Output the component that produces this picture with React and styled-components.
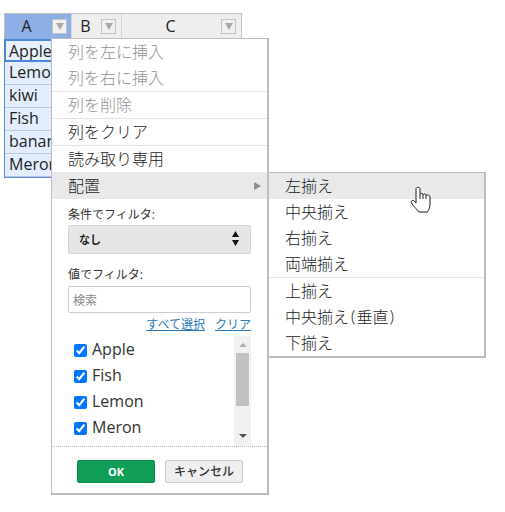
import React from "react";
import styled, { createGlobalStyle } from "styled-components";

const GlobalStyle = createGlobalStyle`
html, body {
  margin: 0;
  padding: 0;
  background: #fff;
  font-family: "Open Sans", "Noto Sans CJK JP", sans-serif;
  color: #222;
}
`;

const Page = styled.div`
  position: relative;
  width: 505px;
  height: 512px;
  overflow: hidden;
  padding: 13px 0 0 4px;
  box-sizing: border-box;
`;

const HeaderRow = styled.div`
  display: flex;
  width: 238px;
  height: 26px;
  box-sizing: border-box;
  border: 1px solid #c0c0c0;
  border-bottom: 0;
`;

const HeaderCell = styled.div`
  position: relative;
  width: ${(p) => p.w}px;
  display: flex;
  align-items: center;
  justify-content: center;
  padding: 0 ${(p) => p.pad || 0}px 2px 0;
  box-sizing: border-box;
  font-size: 16px;
  background: ${(p) => (p.active ? "#8eaee6" : "#eeeeee")};
  border-right: ${(p) => (p.last ? "0" : "1px solid #d8d8d8")};
`;

const DropButton = styled.span`
  position: absolute;
  right: ${(p) => p.right}px;
  top: 5px;
  width: 15px;
  height: 15px;
  box-sizing: border-box;
  background: #f0f0f0;
  border: 1px solid #c4c4c4;
  display: flex;
  align-items: center;
  justify-content: center;
  &::after {
    content: "";
    border-left: 4px solid transparent;
    border-right: 4px solid transparent;
    border-top: 7px solid #a8a8a8;
  }
`;

const Column = styled.div`
  width: 66px;
  border: 1px solid #5b8bd6;
  border-top: 0;
  box-sizing: content-box;
`;

const Cell = styled.div`
  height: 23px;
  box-sizing: border-box;
  padding-left: ${(p) => (p.active ? "3px" : "4px")};
  font-size: 16px;
  line-height: 20px;
  white-space: nowrap;
  overflow: hidden;
  background: ${(p) => (p.active ? "#fff" : "#e3edfd")};
  border-bottom: 1px solid #bcc8dc;
  ${(p) => p.active && "border: 2px solid #4a86d8; margin: 0 -1px; height: 23px; background: #e8f0fe;"}
`;

const MainMenu = styled.div`
  position: absolute;
  left: 51px;
  top: 38px;
  width: 218px;
  height: 457px;
  box-sizing: border-box;
  background: #fff;
  border: 1px solid #bdbdbd;
  border-width: 1px 2px 2px 1px;
  display: flex;
  flex-direction: column;
`;

const MenuItem = styled.div`
  position: relative;
  height: ${(p) => p.h || 26}px;
  flex: none;
  box-sizing: border-box;
  padding: 0 0 2px 16px;
  display: flex;
  align-items: center;
  font-size: 16px;
  font-weight: 300;
  color: ${(p) => (p.disabled ? "#929292" : "#222")};
  background: ${(p) => (p.hover ? "#e9e9e9" : "transparent")};
  ${(p) => p.sep && "border-top: 1px solid #e4e4e4;"}
`;

const Paren = styled.span`
  margin: 0 ${(p) => p.r || 0}px 0 ${(p) => p.l || 0}px;
`;

const SubArrow = styled.span`
  position: absolute;
  right: 6px;
  top: 10px;
  border-top: 4px solid transparent;
  border-bottom: 4px solid transparent;
  border-left: 7px solid #8c8c8c;
`;

const FilterPanel = styled.div`
  flex: none;
  padding: 7px 16px 0;
  display: flex;
  flex-direction: column;
`;

const FilterLabel = styled.div`
  font-size: 12px;
  line-height: 17px;
  color: #333;
  margin-top: ${(p) => p.mt || 0}px;
`;

const SelectBox = styled.div`
  margin-top: 2px;
  height: 29px;
  box-sizing: border-box;
  background: #e6e6e6;
  border: 1px solid #d4d4d4;
  border-radius: 2px;
  padding: 0 11px 2px 10px;
  display: flex;
  align-items: center;
  justify-content: space-between;
  font-size: 11px;
  font-weight: 700;
  color: #222;
`;

const SearchBox = styled.div`
  margin-top: 3px;
  height: 27px;
  box-sizing: border-box;
  border: 1px solid #ccc;
  border-radius: 2px;
  padding-left: 4px;
  display: flex;
  align-items: center;
  font-size: 12px;
  color: #8a8a8a;
`;

const LinkRow = styled.div`
  display: flex;
  justify-content: flex-end;
  gap: 10px;
  margin-top: 3px;
  line-height: 17px;
`;

const FilterLink = styled.span`
  font-size: 12px;
  color: #2a7ab8;
  text-decoration: underline;
`;

const ListArea = styled.div`
  margin-top: 3px;
  height: 110px;
  display: flex;
  justify-content: space-between;
`;

const CheckList = styled.div`
  padding: 1px 0 0 6px;
  display: flex;
  flex-direction: column;
`;

const CheckRow = styled.label`
  height: 26px;
  display: flex;
  align-items: center;
  gap: 5px;
  font-size: 16px;
  color: #333;
  input {
    margin: 0;
    width: 13px;
    height: 13px;
    accent-color: #0075ff;
  }
  span {
    margin-bottom: 2px;
  }
`;

const ScrollBar = styled.div`
  width: 17px;
  height: 110px;
  background: #f1f1f1;
  display: flex;
  flex-direction: column;
  align-items: center;
`;

const ScrollArrow = styled.span`
  margin: ${(p) => (p.up ? "7px 0 6px" : "auto 0 8px")};
  border-left: 4px solid transparent;
  border-right: 4px solid transparent;
  ${(p) => (p.up ? "border-bottom: 4px solid #b0b0b0;" : "border-top: 4px solid #505050;")}
`;

const ScrollThumb = styled.div`
  width: 13px;
  height: 53px;
  background: #c1c1c1;
`;

const Footer = styled.div`
  flex: none;
  border-top: 1px dotted #bbb;
  padding: 13px 0 0 25px;
  display: flex;
  gap: 10px;
`;

const FooterButton = styled.div`
  width: 78px;
  height: 23px;
  box-sizing: border-box;
  border-radius: 2px;
  padding-bottom: 1px;
  display: flex;
  align-items: center;
  justify-content: center;
  font-size: ${(p) => (p.primary ? 11 : 12)}px;
  font-weight: ${(p) => (p.primary ? 700 : 500)};
  color: ${(p) => (p.primary ? "#fff" : "#333")};
  background: ${(p) => (p.primary ? "#0f9d58" : "#efefef")};
  border: 1px solid ${(p) => (p.primary ? "#0f9048" : "#d0d0d0")};
`;

const SubMenu = styled.div`
  position: absolute;
  left: 269px;
  top: 172px;
  width: 217px;
  height: 186px;
  box-sizing: border-box;
  background: #fff;
  border: 1px solid #bdbdbd;
  border-width: 1px 2px 2px 0;
  display: flex;
  flex-direction: column;
`;

const Cursor = styled.svg`
  position: absolute;
  left: 410px;
  top: 186px;
`;

function HandCursor() {
  return (
    <Cursor width="22" height="27" viewBox="0 0 22 27">
      <path
        d="M6 13V3C6 .8 10 .8 10 3V8.5C10.5 7 13 7 13 8.8C13.5 7.5 16 7.5 16 9.5C17 8.5 20 8.8 20 11V18C20 22 18.5 24 17.5 26H9C7.5 23.5 3 20.5 1.3 16.5C.7 14.5 3 13.6 4.2 15L6 17Z"
        fill="#fff"
        stroke="#222"
        strokeWidth="1"
        strokeLinejoin="round"
      />
      <path d="M10 8.5V13M13 8.8V13M16 9.5V13" stroke="#222" strokeWidth="1" fill="none" />
    </Cursor>
  );
}

function UpDownIcon() {
  return (
    <svg width="7" height="15" viewBox="0 0 7 15">
      <path d="M3.5 0L7 6H0Z M3.5 15L0 9H7Z" fill="#111" />
    </svg>
  );
}

const cells = ["Apple", "Lemon", "kiwi", "Fish", "banana", "Meron"];
const checks = ["Apple", "Fish", "Lemon", "Meron"];

export default function App() {
  return (
    <Page>
      <GlobalStyle />
      <HeaderRow>
        <HeaderCell w={67} active pad={23}>
          A<DropButton right={4} />
        </HeaderCell>
        <HeaderCell w={50} pad={22}>
          B<DropButton right={5} />
        </HeaderCell>
        <HeaderCell w={119} last pad={22}>
          C<DropButton right={5} />
        </HeaderCell>
      </HeaderRow>
      <Column>
        {cells.map((c, i) => (
          <Cell key={c} active={i === 0}>
            {c}
          </Cell>
        ))}
      </Column>

      <MainMenu>
        <MenuItem disabled>列を左に挿入</MenuItem>
        <MenuItem disabled>列を右に挿入</MenuItem>
        <MenuItem disabled sep h={27}>
          列を削除
        </MenuItem>
        <MenuItem sep h={27}>
          列をクリア
        </MenuItem>
        <MenuItem sep h={27}>
          読み取り専用
        </MenuItem>
        <MenuItem hover h={27}>
          配置
          <SubArrow />
        </MenuItem>
        <FilterPanel>
          <FilterLabel>条件でフィルタ:</FilterLabel>
          <SelectBox>
            なし
            <UpDownIcon />
          </SelectBox>
          <FilterLabel mt={12}>値でフィルタ:</FilterLabel>
          <SearchBox>検索</SearchBox>
          <LinkRow>
            <FilterLink>すべて選択</FilterLink>
            <FilterLink>クリア</FilterLink>
          </LinkRow>
          <ListArea>
            <CheckList>
              {checks.map((c) => (
                <CheckRow key={c}>
                  <input type="checkbox" defaultChecked />
                  <span>{c}</span>
                </CheckRow>
              ))}
            </CheckList>
            <ScrollBar>
              <ScrollArrow up />
              <ScrollThumb />
              <ScrollArrow />
            </ScrollBar>
          </ListArea>
        </FilterPanel>
        <Footer>
          <FooterButton primary>OK</FooterButton>
          <FooterButton>キャンセル</FooterButton>
        </Footer>
      </MainMenu>

      <SubMenu>
        <MenuItem hover>左揃え</MenuItem>
        <MenuItem>中央揃え</MenuItem>
        <MenuItem>右揃え</MenuItem>
        <MenuItem>両端揃え</MenuItem>
        <MenuItem sep h={27}>
          上揃え
        </MenuItem>
        <MenuItem>
          中央揃え<Paren l={2} r={1}>(</Paren>垂直<Paren l={1} r={2}>)</Paren>
        </MenuItem>
        <MenuItem>下揃え</MenuItem>
      </SubMenu>
      <HandCursor />
    </Page>
  );
}
